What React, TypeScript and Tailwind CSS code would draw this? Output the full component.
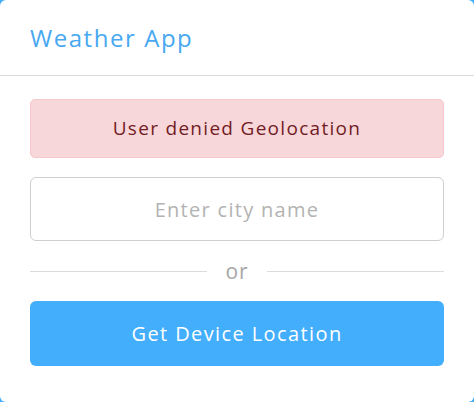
import { useState } from "react";

const font = { fontFamily: '"Open Sans", "Noto Sans", sans-serif' };

export default function App() {
  const [city, setCity] = useState("");

  return (
    <div className="min-h-screen bg-[#43aefc]" style={font}>
      <div className="mx-auto flex h-[402px] w-[474px] flex-col rounded-[6px] bg-white">
        <header className="flex h-[76px] items-center border-b border-[#d9d9d9] px-[30px]">
          <h1 className="text-[24px] font-medium tracking-[1.55px] text-[#48a8f1]">Weather App</h1>
        </header>

        <div className="flex flex-col px-[30px] pt-[23px]">
          <div className="flex h-[59px] items-center justify-center rounded-[5px] border border-[#f5c6cb] bg-[#f8d7da] text-[19px] tracking-[1.3px] text-[#721c24]">
            User denied Geolocation
          </div>

          <input
            className="mt-[19px] h-[64px] rounded-[6px] border border-[#cfcfcf] px-4 text-center text-[20px] tracking-[1.3px] text-[#333] outline-none placeholder:text-[#b3b3b3]"
            value={city}
            onChange={(event) => setCity(event.target.value)}
            placeholder="Enter city name"
          />

          <div className="my-[18px] flex h-[24px] items-center gap-[18px]">
            <span className="h-px flex-1 bg-[#dcdcdc]" />
            <span className="text-[21px] leading-none tracking-[1px] text-[#a6a6a6]">or</span>
            <span className="h-px flex-1 bg-[#dcdcdc]" />
          </div>

          <button
            type="button"
            className="h-[65px] rounded-[6px] bg-[#43aefc] text-[20px] tracking-[1.4px] text-white"
          >
            Get Device Location
          </button>
        </div>
      </div>
    </div>
  );
}
